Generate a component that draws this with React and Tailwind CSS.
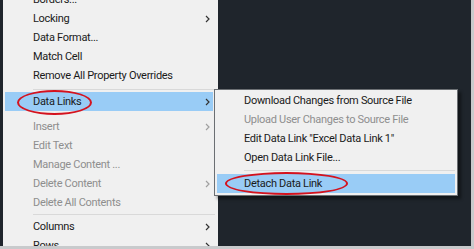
import React from 'react'

const font = { fontFamily: 'Roboto, "Noto Sans", sans-serif' }

function Chevron({ disabled }) {
  return (
    <svg width="5" height="8" viewBox="0 0 5 8" className="shrink-0">
      <polyline
        points="1,1 4,4 1,7"
        fill="none"
        stroke={disabled ? '#a0a0a0' : '#333333'}
        strokeWidth="1.2"
      />
    </svg>
  )
}

function Item({ label, disabled, sub, active }) {
  const box = active
    ? 'ml-[2px] mr-[5px] pl-[28px] pr-[3px] bg-[#99ccf6]'
    : 'pl-[30px] pr-[8px]'
  return (
    <div className={`h-[19px] flex items-center ${box}`}>
      <span className={`flex-1 whitespace-nowrap ${disabled ? 'text-[#8e8e8e]' : 'text-[#1a1a1a]'}`}>{label}</span>
      {sub && <Chevron disabled={disabled} />}
    </div>
  )
}

function Sep({ h, top }) {
  return (
    <div className={`${h} relative`}>
      <div className={`absolute left-[30px] right-[3px] h-px bg-[#d9d9d9] ${top}`} />
    </div>
  )
}

export default function App() {
  return (
    <div className="w-[474px] h-[249px] overflow-hidden border-r-[3px] border-b-[3px] border-[#c8cacc] bg-[#c8cacc]" style={font}>
      <div className="relative flex flex-col w-full h-full bg-[#1f252c] text-[11px] leading-none tracking-[-0.3px]">
        {/* main context menu */}
        <div className="ml-[3px] w-[215px] -mt-[10px] bg-[#f0f0f0] pb-4 shrink-0">
          <Item label="Borders..." />
          <Item label="Locking" sub />
          <Item label="Data Format..." />
          <Item label="Match Cell" />
          <Item label="Remove All Property Overrides" />
          <Sep h="h-[7px]" top="top-[4px]" />
          <Item label="Data Links" sub active />
          <div className="h-[6px]" />
          <Item label="Insert" sub disabled />
          <Item label="Edit Text" disabled />
          <Item label="Manage Content ..." disabled />
          <Item label="Delete Content" sub disabled />
          <Item label="Delete All Contents" disabled />
          <Sep h="h-[5px]" top="top-[2px]" />
          <Item label="Columns" sub />
          <Item label="Rows" sub />
        </div>

        {/* submenu */}
        <div className="absolute left-[214px] top-[89px] w-[244px] bg-[#f0f0f0] border border-[#6b6f73] pt-[1px] pb-[2px] shadow-[3px_3px_3px_rgba(0,0,0,0.45)]">
          <div className="h-[19px] flex items-center pl-[29px] text-[#1a1a1a] whitespace-nowrap">Download Changes from Source File</div>
          <div className="h-[19px] flex items-center pl-[29px] text-[#8e8e8e] whitespace-nowrap">Upload User Changes to Source File</div>
          <div className="h-[19px] flex items-center pl-[29px] text-[#1a1a1a] whitespace-nowrap">Edit Data Link "Excel Data Link 1"</div>
          <div className="h-[19px] flex items-center pl-[29px] text-[#1a1a1a] whitespace-nowrap">Open Data Link File...</div>
          <div className="h-[7px] relative">
            <div className="absolute left-[29px] right-[2px] top-[3px] h-px bg-[#d9d9d9]" />
          </div>
          <div className="h-[19px] mx-[2px] flex items-center pl-[27px] bg-[#99ccf6] text-[#1a1a1a] whitespace-nowrap">Detach Data Link</div>
        </div>

        {/* red annotation ellipses */}
        <div className="absolute left-[17px] top-[90px] w-[75px] h-[25px] rounded-[50%] border-2 border-[#d4121e]" />
        <div className="absolute left-[225px] top-[172px] w-[123px] h-[23px] rounded-[50%] border-2 border-[#d4121e]" />
      </div>
    </div>
  )
}
